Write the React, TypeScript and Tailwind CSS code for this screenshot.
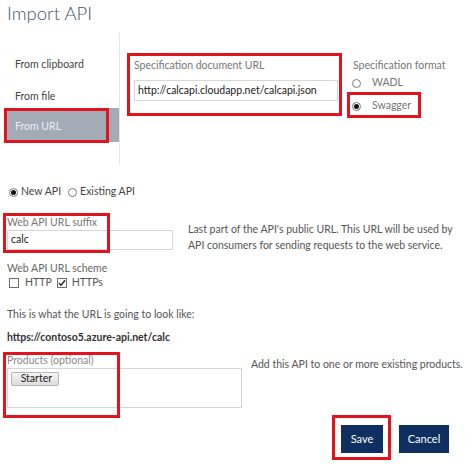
import React from "react";

const Radio = ({ checked }: { checked?: boolean }) => (
  <span className="w-[9px] h-[9px] rounded-full border border-[#7a7a7a] bg-white flex items-center justify-center shrink-0">
    {checked && <span className="w-[5px] h-[5px] rounded-full bg-[#111]" />}
  </span>
);

const Check = ({ checked }: { checked?: boolean }) => (
  <span className="w-[10px] h-[10px] border border-[#6f6f6f] bg-white flex items-center justify-center shrink-0">
    {checked && (
      <svg width="8" height="8" viewBox="0 0 8 8">
        <path d="M1 4.2 L3.1 6.3 L7 1.3" fill="none" stroke="#222" strokeWidth="1.4" />
      </svg>
    )}
  </span>
);

const RedBox = ({ className }: { className: string }) => (
  <div className={"absolute border-[3px] border-[#e1141e] pointer-events-none " + className} />
);

export default function App() {
  return (
    <div className="w-[474px] h-[470px] bg-white overflow-hidden font-['Lato',sans-serif] text-[10.5px] text-[#4a4a4a]">
      <h1 className="pl-[7px] pt-[1px] text-[18.5px] leading-[24px] font-light text-[#44546a]">Import API</h1>

      <div className="flex mt-[8px] h-[132px]">
        <nav className="w-[115px] ml-[4px] flex flex-col pt-[16px] text-[#444]">
          <div className="h-[32px] flex items-center pl-[11px]">From clipboard</div>
          <div className="h-[27px] flex items-center pl-[11px] pt-[5px]">From file</div>
          <div className="relative h-[34px] flex items-center pl-[11px] pt-[3px] bg-[#a3abb7] text-[#eef0f3]">
            From URL
            <RedBox className="left-0 top-0 w-[105px] h-[35px]" />
          </div>
        </nav>
        <div className="w-px bg-[#e6e6e6]" />
        <div className="ml-[14px] pt-[24px]">
          <div className="relative">
            <div className="leading-[16px] text-[#777]">Specification document URL</div>
            <div className="mt-[7px] w-[204px] h-[21px] border border-[#d6d6d6] flex items-center pl-[3px] text-[#222]">
              http://calcapi.cloudapp.net/calcapi.json
            </div>
            <RedBox className="-left-[7px] -top-[4px] w-[215px] h-[63px]" />
          </div>
        </div>
        <div className="ml-[15px] pt-[24px] text-[#777]">
          <div className="leading-[16px]">Specification format</div>
          <div className="h-[20px] flex items-center gap-[11px] -ml-[1px]">
            <Radio />
            <span>WADL</span>
          </div>
          <div className="relative mt-[3px] h-[20px] flex items-center gap-[11px] -ml-[1px]">
            <Radio checked />
            <span>Swagger</span>
            <RedBox className="-left-[5px] -top-[4px] w-[74px] h-[26px]" />
          </div>
        </div>
      </div>

      <div className="pl-[7px]">
        <div className="mt-[19px] h-[16px] flex items-center text-[#444] pl-[2px]">
          <Radio checked />
          <span className="ml-[3px]">New API</span>
          <span className="ml-[7px]"><Radio /></span>
          <span className="ml-[3px]">Existing API</span>
        </div>

        <div className="mt-[14px] flex">
          <div className="relative w-[166px] shrink-0">
            <div className="leading-[16px] text-[#777]">Web API URL suffix</div>
            <div className="w-[166px] h-[20px] border border-[#d6d6d6] flex items-center pl-[3px] text-[#222]">calc</div>
            <RedBox className="-left-[4px] -top-[1px] w-[107px] h-[40px]" />
          </div>
          <div className="ml-[15px] mt-[7px] leading-[16px] text-[#555] whitespace-nowrap">
            Last part of the API's public URL. This URL will be used by
            <br />
            API consumers for sending requests to the web service.
          </div>
        </div>

        <div className="mt-[7px] leading-[16px] text-[#666]">Web API URL scheme</div>
        <div className="h-[14px] flex items-center pl-[2px] text-[#555]">
          <Check />
          <span className="ml-[6px]">HTTP</span>
          <span className="ml-[5px]"><Check checked /></span>
          <span className="ml-[5px]">HTTPs</span>
        </div>

        <div className="mt-[16px] leading-[16px] text-[#555]">This is what the URL is going to look like:</div>
        <div className="mt-[7px] leading-[16px] font-bold text-[#333]">https://contoso5.azure-api.net/calc</div>

        <div className="mt-[7px] flex">
          <div className="relative w-[235px] shrink-0">
            <div className="leading-[16px] text-[#888]">Products (optional)</div>
            <div className="h-[40px] border border-[#d6d6d6] pt-[3px] pl-[3px]">
              <div className="w-[48px] h-[14px] border border-[#b5b5b5] rounded-[2px] bg-gradient-to-b from-[#f6f6f6] to-[#dcdcdc] flex items-center justify-end pr-[6px] text-[#222]">
                Starter
              </div>
            </div>
            <RedBox className="-left-[4px] top-0 w-[117px] h-[66px]" />
          </div>
          <div className="ml-[9px] mt-[4px] leading-[16px] text-[#555] whitespace-nowrap">Add this API to one or more existing products.</div>
        </div>
      </div>

      <div className="mt-[17px] flex justify-end pr-[25px] gap-[16px]">
        <div className="relative">
          <button className="w-[42px] h-[28px] bg-[#0e2f5f] text-white text-[11px]">Save</button>
          <RedBox className="-left-[9px] -top-[10px] w-[59px] h-[45px]" />
        </div>
        <button className="w-[50px] h-[28px] bg-[#0e2f5f] text-white text-[11px]">Cancel</button>
      </div>
    </div>
  );
}
